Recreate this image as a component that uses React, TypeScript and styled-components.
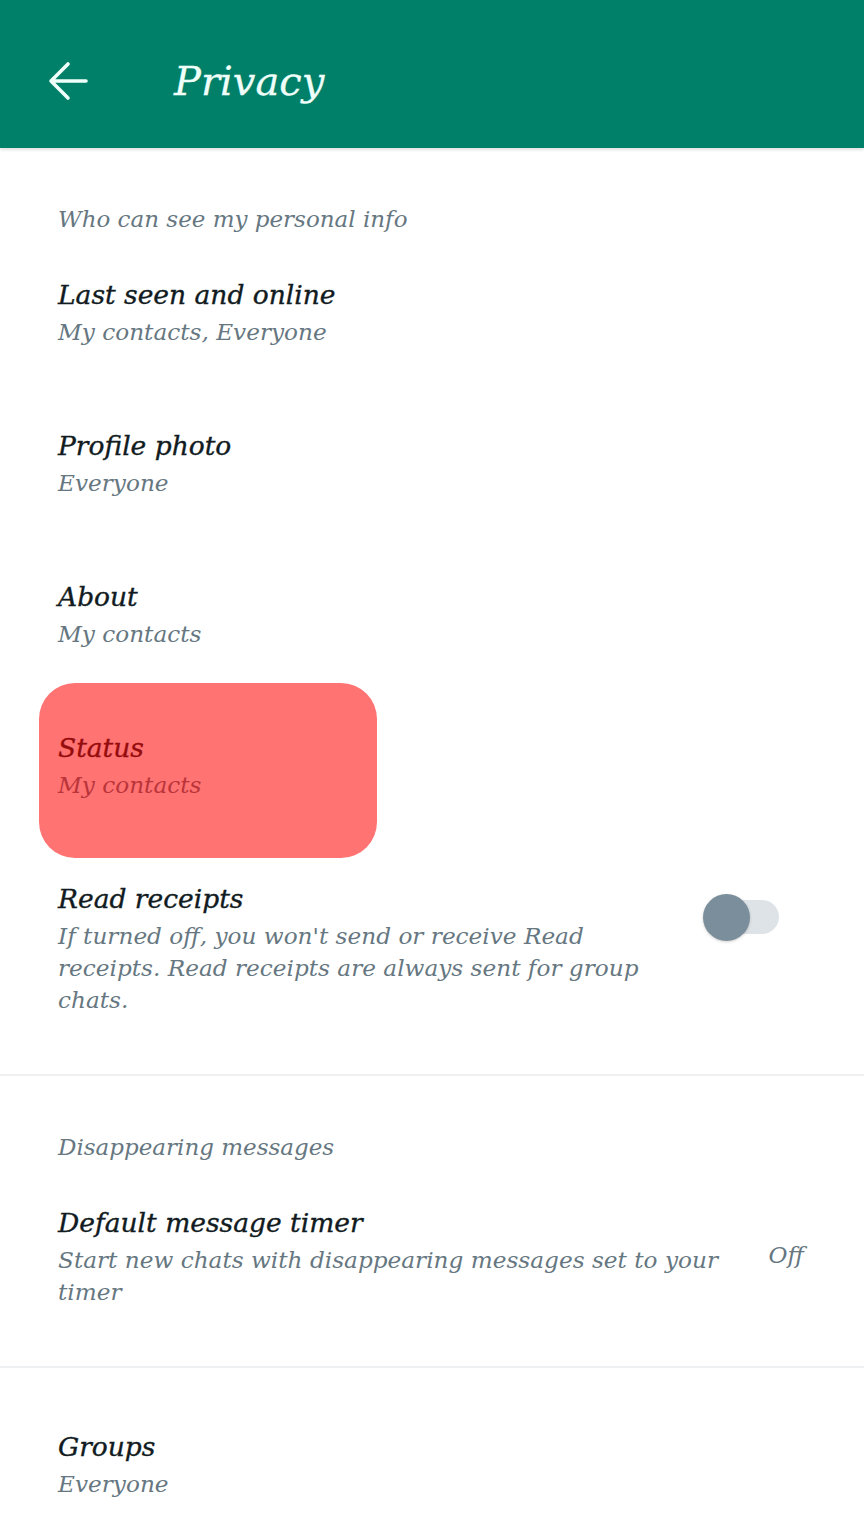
import React from "react";
import styled, { createGlobalStyle } from "styled-components";

const Global = createGlobalStyle`
  html, body { margin: 0; padding: 0; background: #ffffff; }
  body { font-family: "DejaVu Serif", "Liberation Serif", serif; font-style: italic; }
  * { box-sizing: border-box; }
`;

const Page = styled.div`
  width: 864px;
  min-height: 1536px;
  background: #ffffff;
  overflow: hidden;
`;

const Header = styled.header`
  height: 148px;
  background: #008069;
  display: flex;
  align-items: center;
  padding-left: 46px;
  padding-top: 14px;
  box-shadow: 0 2px 3px rgba(0, 0, 0, 0.12);
  position: relative;
  z-index: 1;
`;

const BackButton = styled.button`
  width: 44px;
  height: 44px;
  border: none;
  background: transparent;
  padding: 0;
  display: flex;
  align-items: center;
  justify-content: center;
  margin-right: 84px;
`;

const HeaderTitle = styled.h1`
  margin: 0;
  font-size: 40px;
  font-weight: 400;
  font-style: italic;
  color: #effff9;
  line-height: 48px;
  -webkit-text-stroke: 0.3px #effff9;
`;

const SectionLabel = styled.div`
  padding: 55px 58px 0;
  font-size: 23px;
  line-height: 32px;
  color: #667781;
`;

const Row = styled.div<{ $top?: number; $bottom?: number }>`
  position: relative;
  display: flex;
  align-items: flex-start;
  padding: ${(p) => p.$top ?? 38}px 59px ${(p) => p.$bottom ?? 38}px 58px;
`;

const TextCol = styled.div<{ $max?: number }>`
  flex: 1;
  max-width: ${(p) => (p.$max ? `${p.$max}px` : "none")};
  display: flex;
  flex-direction: column;
`;

const Title = styled.div`
  font-size: 26.5px;
  line-height: 42px;
  margin-top: 1px;
  color: #111b21;
  -webkit-text-stroke: 0.35px #111b21;
`;

const Sub = styled.div`
  font-size: 23.2px;
  line-height: 32px;
  color: #667781;
`;

const Divider = styled.div`
  height: 2px;
  background: #eef0f1;
`;

const Highlight = styled.div`
  position: absolute;
  left: 39px;
  top: -5px;
  width: 338px;
  height: 175px;
  border-radius: 36px;
  background: rgba(255, 0, 0, 0.55);
  pointer-events: none;
`;

const SwitchWrap = styled.div`
  margin-left: auto;
  margin-top: 16px;
  margin-right: 26px;
  position: relative;
  width: 77px;
  height: 48px;
  display: flex;
  align-items: center;
`;

const SwitchTrack = styled.div`
  position: absolute;
  left: 18px;
  right: 0;
  top: 7px;
  height: 34px;
  border-radius: 17px;
  background: #dee3e7;
`;

const SwitchThumb = styled.div`
  position: relative;
  left: 1px;
  width: 47px;
  height: 47px;
  border-radius: 50%;
  background: #7b8e9b;
  box-shadow: 0 1px 3px rgba(0, 0, 0, 0.18);
`;

const Value = styled.div`
  margin-left: auto;
  margin-top: 38px;
  margin-right: 1px;
  font-size: 23.2px;
  line-height: 32px;
  color: #667781;
`;

const BackArrow = () => (
  <svg width="44" height="44" viewBox="0 0 44 44" fill="none">
    <path
      d="M40 22H6M22 5L5 22L22 39"
      stroke="#effff9"
      strokeWidth="3.6"
      strokeLinecap="round"
      strokeLinejoin="round"
    />
  </svg>
);

type Item = { title: string; sub: string };

const personal: Item[] = [
  { title: "Last seen and online", sub: "My contacts, Everyone" },
  { title: "Profile photo", sub: "Everyone" },
  { title: "About", sub: "My contacts" },
];

export default function App() {
  return (
    <Page>
      <Global />
      <Header>
        <BackButton aria-label="Back">
          <BackArrow />
        </BackButton>
        <HeaderTitle>Privacy</HeaderTitle>
      </Header>

      <SectionLabel>Who can see my personal info</SectionLabel>
      {personal.map((it) => (
        <Row key={it.title}>
          <TextCol>
            <Title>{it.title}</Title>
            <Sub>{it.sub}</Sub>
          </TextCol>
        </Row>
      ))}
      <Row>
        <TextCol>
          <Title>Status</Title>
          <Sub>My contacts</Sub>
        </TextCol>
        <Highlight />
      </Row>
      <Row $bottom={58}>
        <TextCol $max={610}>
          <Title>Read receipts</Title>
          <Sub>
            If turned off, you won't send or receive Read receipts. Read receipts are always sent for group chats.
          </Sub>
        </TextCol>
        <SwitchWrap>
          <SwitchTrack />
          <SwitchThumb />
        </SwitchWrap>
      </Row>
      <Divider />

      <SectionLabel>Disappearing messages</SectionLabel>
      <Row $bottom={58}>
        <TextCol $max={680}>
          <Title>Default message timer</Title>
          <Sub>Start new chats with disappearing messages set to your timer</Sub>
        </TextCol>
        <Value>Off</Value>
      </Row>
      <Divider />

      <Row $top={57}>
        <TextCol>
          <Title>Groups</Title>
          <Sub>Everyone</Sub>
        </TextCol>
      </Row>
    </Page>
  );
}
